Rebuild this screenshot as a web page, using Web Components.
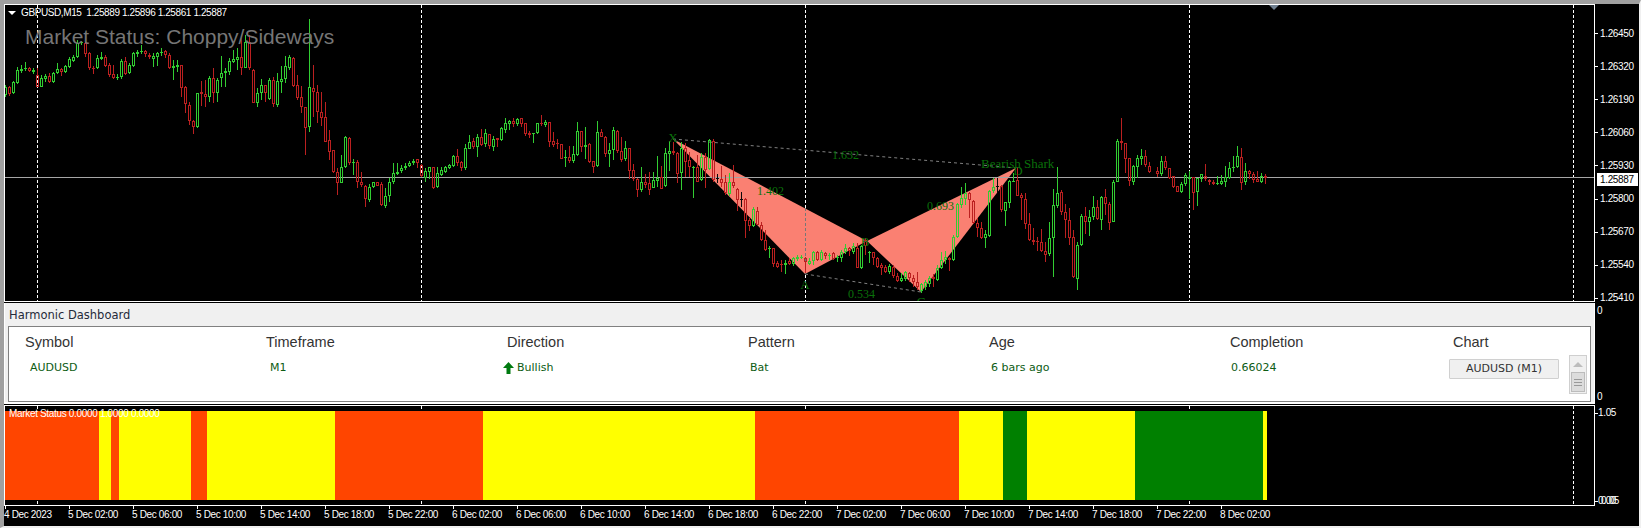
<!DOCTYPE html>
<html lang="en">
<head>
<meta charset="utf-8">
<title>Harmonic Dashboard</title>
<style>
html,body{margin:0;padding:0;background:#f0f0f0;}
</style>
</head>
<body>
<mt-terminal>
  <mt-price-chart></mt-price-chart>
  <mt-scale mode="price" labels="1.26450,1.26320,1.26190,1.26060,1.25930,1.25800,1.25670,1.25540,1.25410" current="1.25887"></mt-scale>
  <mt-dashboard title-text="Harmonic Dashboard">
    <mt-pattern-row symbol="AUDUSD" timeframe="M1" direction="Bullish" pattern="Bat" age="6 bars ago" completion="0.66024" chart="AUDUSD (M1)"></mt-pattern-row>
  </mt-dashboard>
  <mt-scale mode="ends" top="0" bottom="0"></mt-scale>
  <mt-status-panel label="Market Status 0.0000 1.0000 0.0000"></mt-status-panel>
  <mt-scale mode="status"></mt-scale>
  <mt-time-axis labels="4 Dec 2023,5 Dec 02:00,5 Dec 06:00,5 Dec 10:00,5 Dec 14:00,5 Dec 18:00,5 Dec 22:00,6 Dec 02:00,6 Dec 06:00,6 Dec 10:00,6 Dec 14:00,6 Dec 18:00,6 Dec 22:00,7 Dec 02:00,7 Dec 06:00,7 Dec 10:00,7 Dec 14:00,7 Dec 18:00,7 Dec 22:00,8 Dec 02:00"></mt-time-axis>
</mt-terminal>

<script>
const UI_FONT = '"DejaVu Sans",sans-serif';
const AXIS_FONT = '"Liberation Sans",Arial,sans-serif';

/* candle traces: colour + high,low,bodyTop,bodyBottom, in 3x-crop pixels */
const SEGMENTS = [
 {n:1,y:0,d:"g255,290,262,285 r258,288,262,283 g243,282,246,280 g202,252,210,250 g195,220,207,212 g186,212,205,208 r202,215,205,213 g205,222,209,217 r205,262,225,260 g225,262,235,260 g222,245,228,236 r220,250,229,246 g215,248,220,245 g190,222,208,220 r205,228,208,215 g195,218,198,215 g172,203,177,200 g165,185,170,182 g120,175,128,172 g122,135,127,130 r125,172,128,163 r155,210,158,205 r198,222,203,208 g165,208,173,205 g155,180,170,176 r165,200,170,197 r190,232,195,225 r195,238,223,233 g222,240,230,232 g178,236,182,232 r172,225,183,222 g190,222,195,220 g157,200,160,198 g150,172,155,162 g135,162,152,155 r150,170,152,162 r160,178,166,172 g160,200,167,177 g155,198,160,170 g143,168,155,160 r150,175,153,165 r160,207,165,205 g180,240,198,205 g180,215,196,200 r195,292,195,265 r258,340,262,312 r305,375,315,362 r360,402,362,382 g278,385,280,380 r243,318,277,283 r240,320,283,290 g228,305,233,290 r205,310,235,280 g235,305,240,278 g168,260,220,235 g205,260,213,220 g175,225,182,215 g150,190,178,185 g145,210,172,180 r115,225,172,203 g105,205,125,203 r105,210,125,205 r208,310,210,310 g265,322,280,310 g238,300,255,280 r255,305,255,280 g235,300,240,298 r230,320,240,312 g220,320,243,315 g198,280,238,245 g168,250,198,238 g165,210,172,205 r172,260,175,258 r225,300,255,295 r258,340,292,322 r322,465,322,385 g58,395,262,380 r195,350,265,275 r255,370,275,335 r275,378,335,355 r305,425,352,425 r390,480,420,455 r450,520,450,515 r505,585,515,548 g465,550,502,550 g408,505,412,502 r412,495,415,490 g478,525,485,490 r480,565,485,545 r515,560,545,555 r555,620,557,598 g552,605,562,600 g545,565,547,562 r545,558,547,557 r545,618,553,615 g565,625,587,618 g535,605,545,587 g490,552,518,545 g490,525,515,522 g495,518,503,512 g490,510,497,503 g483,502,490,498 g478,495,482,490 r478,505,478,490"},
 {n:105,y:90,d:"r222,262,225,258 g235,275,243,263 g230,268,232,246 r230,298,232,295 g230,295,250,292 g232,258,240,254 g228,250,232,246 g222,236,225,233 g195,232,198,228 r178,228,198,220 r212,242,216,234 g162,240,175,235 g135,178,157,176 r145,178,153,172 g132,200,141,170 r118,168,142,165 g118,170,130,163 r132,178,133,168 g138,182,148,170 r145,172,145,149 g112,152,114,150 g85,130,100,120 g90,120,92,101 r85,110,93,101 g85,108,88,102 r85,110,85,102 r98,138,99,132 r122,143,130,135 g128,158,130,133 g98,133,100,130 r75,108,98,102 g90,112,96,106 r96,172,97,155 r125,170,154,164 r148,178,158,161 r163,208,163,206 g180,230,202,205 r168,220,202,212 g168,218,193,212 g97,198,124,196 r124,185,124,170 g112,208,164,170 r160,218,162,215 r213,248,214,230 g93,232,127,228 r118,142,127,140 r137,200,140,193 g160,230,181,193 g112,210,121,180 r120,188,123,183 r142,215,184,210 g153,212,175,208 r175,268,175,242 r222,272,240,268 r265,320,267,300 g232,305,277,300 r252,295,277,285 r245,315,280,300 g245,295,271,293 g198,290,263,272"},
 {n:165,y:125,d:"r122,192,157,192 g68,187,85,183 g48,138,78,86 r50,90,78,85 r80,175,85,148 g50,195,70,143 r55,155,68,110 r80,155,105,125 g122,218,125,128 r90,172,125,170 g85,168,95,165 r85,190,95,135 g42,135,45,133 r42,170,48,165 k148,175,160,163 r122,185,162,175 r150,210,172,205 g145,212,170,208 r120,190,170,182 r190,258,193,225 k200,245,222,224 r220,338,222,288 r278,318,285,302 g245,305,253,302 r245,300,258,300 r290,348,300,345 r315,378,345,375 g362,400,370,373 r368,425,370,418 r408,430,413,425 r405,442,417,420 g405,447,415,420 r398,420,408,418 g395,422,400,416 g390,408,395,403 g390,402,395,398 r395,445,400,410 g398,420,408,417 g378,420,382,408 r378,408,380,405 g376,408,380,405 r380,402,385,392 g385,405,390,393 r382,405,385,402 g390,412,395,400 g375,412,382,398 g358,388,370,382 r365,392,370,378 g355,388,362,380 r355,428,368,428 g360,432,362,428"},
 {n:216,y:125,d:"r338,390,345,362 g378,415,382,385 r382,420,382,398 r395,430,400,425 r415,450,420,430 r420,445,427,442 g418,448,423,440 r420,460,425,452 r445,470,452,468 g445,470,458,467 g438,468,442,462 r442,470,445,460 r450,485,460,472 r442,495,472,487 g475,505,478,498 g465,495,472,487 g452,485,458,478 r448,487,455,462 g420,468,428,465 g382,432,405,430 g378,418,395,405 r395,438,398,405 g330,408,335,405 g235,338,238,335 g185,250,218,240 g175,240,203,222 r200,280,203,225 r225,298,227,295 r280,335,295,308 r290,342,310,338 g315,368,328,338 g195,335,198,332 g158,205,185,198 k160,205,183,185 r180,260,183,255 g230,303,232,258 g165,250,168,233 g145,172,167,172 r125,212,165,212 r205,285,210,220 r205,312,222,298 r265,348,298,345 r310,360,346,350 r335,378,348,350 r312,382,350,378 r350,412,378,390 g292,392,340,388 g192,455,240,340 g125,250,203,243"},
 {n:265,y:105,d:"r255,330,262,320 r298,400,322,345 r310,420,345,398 r375,518,397,515 g412,555,420,523 g328,422,333,420 r305,388,333,352 g315,392,335,352 g272,345,305,335 r285,345,305,342 g272,375,275,345 r252,330,275,298 r292,375,298,353 g225,352,230,352 g102,230,108,230 r40,135,108,113 r115,205,115,163 r158,242,160,228 g180,240,183,230 g150,218,160,185 g133,180,152,163 r136,185,152,180 r172,205,182,200 - r185,215,198,208 g153,212,168,208 r153,195,168,190 r190,222,190,220 r212,248,214,245 r243,260,244,260 g232,265,238,260 g205,242,210,238 g198,282,217,222 r215,315,217,263 g218,302,220,262 g206,232,208,223 r178,228,212,223 r222,240,224,232 r225,240,232,238 g212,240,235,238 g210,240,228,236 g183,245,215,230 g170,222,190,218 g152,200,185,190 g123,188,153,185 r128,255,157,233 g175,240,198,230 r195,222,198,208 r200,235,208,225 r198,232,222,230 g205,235,214,230 r208,238,213,218"}
];

function candlePaths(){
  const out={g:'',r:'',k:''};
  const box=(x,y,w,h)=>`M${x} ${y}h${w}v${h}h${-w}z`;
  for(const s of SEGMENTS){
    s.d.split(' ').forEach((tok,i)=>{
      if(tok==='-')return;
      const c=tok[0];
      const [hi,lo,t,b]=tok.slice(1).split(',').map(v=>Math.round(s.y+Number(v)/3));
      const cx=4*(s.n+i)+1;
      let p='';
      const top=t, bot=Math.max(b,t+1);
      if(hi<top)p+=box(cx,hi,1,top-hi);
      if(lo>bot)p+=box(cx,bot,1,lo-bot);
      const h=bot-top;
      if(h<=2){p+=box(cx-1,top,3,h);}
      else{
        p+=box(cx-1,top,3,1)+box(cx-1,bot-1,3,1)+box(cx-1,top+1,1,h-2)+box(cx+1,top+1,1,h-2);
      }
      out[c]+=p;
    });
  }
  return out;
}

class MtTerminal extends HTMLElement{
  constructor(){
    super();
    this.attachShadow({mode:'open'}).innerHTML=`<style>
      :host{display:grid;box-sizing:border-box;width:1641px;height:528px;
        border-style:solid;border-width:4px 2px 2px 4px;border-color:#a0a0a0 #f0f0f0 #f0f0f0 #a0a0a0;
        background:#000;grid-template-columns:1591px 44px;grid-template-rows:299px 102px 101px 20px;overflow:hidden;}
    </style><slot></slot>`;
  }
}

class MtPriceChart extends HTMLElement{
  constructor(){
    super();
    const p=candlePaths();
    const grid=[37,421,805,1189,1573].map(x=>`<line x1="${x+.5}" x2="${x+.5}" y1="5" y2="301"/>`).join('');
    this.attachShadow({mode:'open'}).innerHTML=`<style>
      :host{display:block;box-sizing:border-box;height:298px;border:1px solid #fff;position:relative;background:#000;overflow:hidden;}
      svg{display:block;}
      .status{position:absolute;left:20px;top:20px;font:21px/24px ${AXIS_FONT};color:#767676;white-space:nowrap;}
      .head{position:absolute;left:3px;top:1px;display:flex;align-items:center;gap:4px;color:#fff;font:10px/14px ${AXIS_FONT};letter-spacing:-.4px;white-space:pre;}
      .marker{position:absolute;left:1264px;top:0;width:0;height:0;border-left:5px solid transparent;border-right:5px solid transparent;border-top:5px solid #708090;}
      text{font-family:"Liberation Serif","Times New Roman",serif;font-size:12px;fill:#0a700a;}
      text.name{font-size:13px;}
    </style>
    <svg width="1589" height="296" viewBox="5 5 1589 296" shape-rendering="crispEdges">
      <g stroke="#fff" stroke-width="1" stroke-dasharray="3 2">${grid}</g>
      <g shape-rendering="geometricPrecision" fill="#fa8072">
        <polygon points="673,139 805,274 867,241"/>
        <polygon points="867,241 921,292 1016,168"/>
      </g>
      <g stroke="#808080" stroke-width="1" stroke-dasharray="3 3" shape-rendering="geometricPrecision">
        <line x1="673" y1="139" x2="1016" y2="168"/>
        <line x1="805" y1="274" x2="921" y2="292"/>
      </g>
      <line x1="805.5" x2="805.5" y1="208" y2="274" stroke="#777" stroke-dasharray="3 2"/>
      <rect x="5" y="177" width="1589" height="1" fill="#a6a6a6"/>
      <path d="${p.g}" fill="#32cd32"/>
      <path d="${p.r}" fill="#bb2020"/>
      <path d="${p.k}" fill="#0a0a0a"/>
      <g shape-rendering="geometricPrecision">
        <text class="name" x="673" y="142" text-anchor="middle">X</text>
        <text class="name" x="805" y="289" text-anchor="middle">A</text>
        <text class="name" x="865" y="246" text-anchor="middle">B</text>
        <text class="name" x="921" y="306" text-anchor="middle">C</text>
        <text class="name" x="1018" y="175" text-anchor="middle">D</text>
        <text x="832" y="159">1.632</text>
        <text x="757" y="195">1.402</text>
        <text x="927" y="210">0.693</text>
        <text x="848" y="298">0.534</text>
        <text class="name" x="981" y="168">Bearish Shark</text>
      </g>
    </svg>
    <div class="head"><svg width="8" height="4" viewBox="0 0 8 4" style="margin-right:1px"><polygon points="0,0 8,0 4,4" fill="#fff"/></svg><span>GBPUSD,M15  1.25889 1.25896 1.25861 1.25887</span></div>
    <div class="status">Market Status: Choppy/Sideways</div>
    <div class="marker"></div>`;
  }
}

class MtScale extends HTMLElement{
  constructor(){
    super();
    const mode=this.getAttribute('mode');
    let body='';
    if(mode==='price'){
      const rows=this.getAttribute('labels').split(',').map(l=>`<div class="row"><i></i><span>${l}</span></div>`).join('');
      body=`<div class="price">${rows}</div><div class="tag">${this.getAttribute('current')}</div>`;
    }else if(mode==='ends'){
      body=`<div class="ends"><span>${this.getAttribute('top')}</span><span>${this.getAttribute('bottom')}</span></div>`;
    }else{
      body=`<div class="stat"><div class="row"><i></i><span>1.05</span></div><div class="row low"><i></i><span class="a">0.00</span><span class="b">0.05</span></div></div>`;
    }
    this.attachShadow({mode:'open'}).innerHTML=`<style>
      :host{display:block;position:relative;background:#000;color:#fff;font:10px/12px ${AXIS_FONT};letter-spacing:-.35px;overflow:hidden;}
      .price{padding-top:13px;}
      .row{height:33.1px;display:flex;align-items:center;gap:2px;}
      i{display:block;width:3px;height:1px;background:#fff;flex:none;}
      .tag{position:absolute;left:2px;top:169px;width:41px;height:13px;background:#fff;color:#000;box-sizing:border-box;padding-left:3px;line-height:13px;}
      .ends{display:flex;flex-direction:column;justify-content:space-between;box-sizing:border-box;padding:2px 0 0 2px;height:100px;}
      .stat{padding-top:2px;box-sizing:border-box;display:flex;flex-direction:column;justify-content:space-between;height:101px;}
      .stat .row{height:12px;gap:0;}
      .stat .row.low{position:relative;top:1px;}
      .stat .b{position:absolute;left:6px;}
    </style>${body}`;
  }
}

class MtDashboard extends HTMLElement{
  constructor(){
    super();
    this.attachShadow({mode:'open'}).innerHTML=`<style>
      :host{display:flex;flex-direction:column;box-sizing:border-box;height:101px;border:solid #fff;border-width:0 1px 2px 1px;background:#f0f0f0;}
      .title{height:24px;flex:none;display:flex;align-items:center;padding-left:4px;font:11.5px/14px ${UI_FONT};color:#252a3a;}
      .box{flex:1;margin:-1px 3px 0 3px;background:#fff;border:1px solid #808080;position:relative;box-sizing:border-box;min-height:0;}
      .heads{display:grid;grid-template-columns:241px 241px 241px 241px 241px 223px auto;padding:7px 0 0 16px;font:14.5px/17px ${AXIS_FONT};color:#333;}
    </style>
    <div class="title">${this.getAttribute('title-text')}</div>
    <div class="box">
      <div class="heads"><span>Symbol</span><span>Timeframe</span><span>Direction</span><span>Pattern</span><span>Age</span><span>Completion</span><span>Chart</span></div>
      <slot></slot>
    </div>`;
  }
}

class MtPatternRow extends HTMLElement{
  constructor(){
    super();
    const a=n=>this.getAttribute(n);
    this.attachShadow({mode:'open'}).innerHTML=`<style>
      :host{display:grid;grid-template-columns:240px 238px 242px 241px 240px 218px 110px 10px 18px;padding:0 0 0 21px;
        font:11px/14px ${UI_FONT};color:#0d5c14;height:40px;margin-top:2px;align-items:start;}
      .cell{padding-top:8px;}
      .dir{display:flex;align-items:center;gap:3px;margin-left:-5px;}
      .dir svg{flex:none;}
      button{all:unset;box-sizing:border-box;width:110px;height:20px;margin:6px 0 0 0;background:#f0f0f0;border:1px solid #d0d0d0;border-radius:1px;color:#333;text-align:center;font:11px/18px ${UI_FONT};}
      .scroll{grid-column:9;box-sizing:border-box;width:18px;height:39px;margin:2px 0 0 0;background:#f0f0f0;border:1px solid #cfcfcf;display:flex;flex-direction:column;align-items:center;}
      .up{height:16px;display:flex;align-items:center;justify-content:center;flex:none;}
      .thumb{flex:1;width:14px;box-sizing:border-box;background:#dcdcdc;border:1px solid #bcbcbc;margin-bottom:1px;display:flex;flex-direction:column;align-items:center;justify-content:center;gap:2px;}
      .thumb b{display:block;width:8px;height:1px;background:#999;}
    </style>
    <div class="cell">${a('symbol')}</div>
    <div class="cell">${a('timeframe')}</div>
    <div class="cell dir"><svg width="11" height="12" viewBox="0 0 11 12"><path d="M5.5 0 L11 6 H7.5 V12 H3.5 V6 H0 Z" fill="#007a10"/></svg><span>${a('direction')}</span></div>
    <div class="cell">${a('pattern')}</div>
    <div class="cell">${a('age')}</div>
    <div class="cell">${a('completion')}</div>
    <button type="button">${a('chart')}</button>
    <div></div>
    <div class="scroll">
      <div class="up"><svg width="10" height="5" viewBox="0 0 10 5"><polygon points="0,5 10,5 5,0" fill="#bdbdbd"/></svg></div>
      <div class="thumb"><b></b><b></b><b></b></div>
    </div>`;
  }
}

class MtStatusPanel extends HTMLElement{
  constructor(){
    super();
    const bars=[['o',94],['y',12],['o',8],['y',72],['o',16],['y',128],['o',148],['y',272],['o',204],['y',44],['g',24],['y',108],['g',128],['y',4]];
    const grid=[37,421,805,1189,1573].map(x=>`<line x1="${x-4.5}" x2="${x-4.5}" y1="0" y2="100"/>`).join('');
    this.attachShadow({mode:'open'}).innerHTML=`<style>
      :host{display:block;box-sizing:border-box;height:101px;border:1px solid #fff;position:relative;background:#000;overflow:hidden;}
      svg{position:absolute;left:0;top:0;}
      .bars{position:relative;display:flex;height:89px;margin-top:5px;}
      .bars div{flex:none;height:100%;}
      .o{background:#ff4500}.y{background:#ffff00}.g{background:#008000}
      .lab{position:absolute;left:4px;top:2px;color:#fff;font:10px/12px ${AXIS_FONT};letter-spacing:-.33px;white-space:nowrap;}
    </style>
    <svg width="1589" height="99" shape-rendering="crispEdges"><g stroke="#fff" stroke-dasharray="3 2">${grid}</g></svg>
    <div class="bars">${bars.map(([c,w])=>`<div class="${c}" style="width:${w}px"></div>`).join('')}</div>
    <div class="lab">${this.getAttribute('label')}</div>`;
  }
}

class MtTimeAxis extends HTMLElement{
  constructor(){
    super();
    const items=this.getAttribute('labels').split(',').map(l=>`<div class="t"><span>${l}</span></div>`).join('');
    this.attachShadow({mode:'open'}).innerHTML=`<style>
      :host{display:flex;grid-column:1 / -1;background:#000;color:#fff;font:10px/12px ${AXIS_FONT};letter-spacing:-.35px;height:20px;overflow:hidden;}
      .t{flex:none;width:64px;position:relative;padding-top:3px;white-space:nowrap;box-sizing:border-box;}
      .t::before{content:"";position:absolute;left:1px;top:0;width:1px;height:3px;background:#fff;}
    </style>${items}`;
  }
}

customElements.define('mt-terminal',MtTerminal);
customElements.define('mt-price-chart',MtPriceChart);
customElements.define('mt-scale',MtScale);
customElements.define('mt-dashboard',MtDashboard);
customElements.define('mt-pattern-row',MtPatternRow);
customElements.define('mt-status-panel',MtStatusPanel);
customElements.define('mt-time-axis',MtTimeAxis);
</script>
</body>
</html>
